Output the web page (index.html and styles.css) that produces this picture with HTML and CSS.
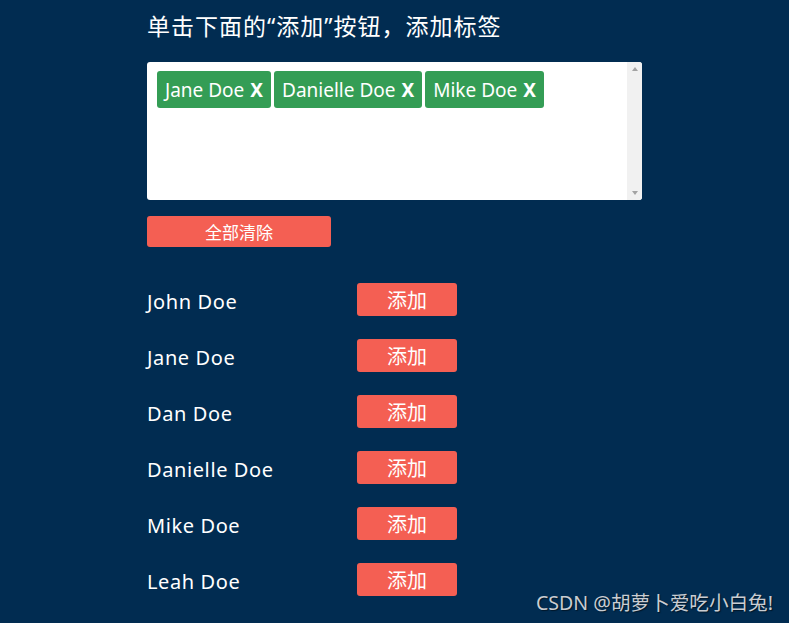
FILE: index.html
```html
<!DOCTYPE html>
<html lang="zh-CN">
<head>
<meta charset="utf-8">
<title>添加标签</title>
<link rel="stylesheet" href="styles.css">
</head>
<body>
<main class="page">
  <h1 class="title">单击下面的“添加”按钮，添加标签</h1>
  <div class="tagbox">
    <div class="tags">
      <span class="tag">Jane Doe <b class="tag-x">X</b></span>
      <span class="tag">Danielle Doe <b class="tag-x">X</b></span>
      <span class="tag">Mike Doe <b class="tag-x">X</b></span>
    </div>
    <div class="scrollbar" aria-hidden="true">
      <span class="arrow up"></span>
      <span class="arrow down"></span>
    </div>
  </div>
  <button class="btn clear">全部清除</button>
  <ul class="people">
    <li class="person"><span class="name">John Doe</span><button class="btn add">添加</button></li>
    <li class="person"><span class="name">Jane Doe</span><button class="btn add">添加</button></li>
    <li class="person"><span class="name">Dan Doe</span><button class="btn add">添加</button></li>
    <li class="person"><span class="name">Danielle Doe</span><button class="btn add">添加</button></li>
    <li class="person"><span class="name">Mike Doe</span><button class="btn add">添加</button></li>
    <li class="person"><span class="name">Leah Doe</span><button class="btn add">添加</button></li>
  </ul>
</main>
<div class="watermark">CSDN @胡萝卜爱吃小白兔!</div>
</body>
</html>
```

FILE: styles.css
```css
html, body {
  margin: 0;
  height: 100%;
}

body {
  background: #012c51;
  color: #fff;
  font-family: "Noto Sans", "Noto Sans CJK SC", sans-serif;
  overflow: hidden;
  position: relative;
}

.page {
  padding: 10px 0 0 147px;
}

.title {
  margin: 0;
  font-size: 23px;
  line-height: 32px;
  font-weight: 400;
  letter-spacing: 1px;
}

/* tag area: tag list plus a classic vertical scrollbar strip */
.tagbox {
  margin-top: 20px;
  width: 495px;
  height: 138px;
  display: flex;
  background: #fff;
  border-radius: 3px;
  overflow: hidden;
}

.tags {
  flex: 1;
  display: flex;
  flex-wrap: wrap;
  align-content: flex-start;
  gap: 3px;
  padding: 9px 10px;
}

.scrollbar {
  width: 15px;
  background: #f1f1f1;
  display: flex;
  flex-direction: column;
  justify-content: space-between;
  align-items: center;
  padding: 5px 0;
}

.arrow {
  width: 0;
  height: 0;
  border-left: 3.5px solid transparent;
  border-right: 3.5px solid transparent;
}

.arrow.up {
  border-bottom: 4px solid #a3a3a3;
}

.arrow.down {
  border-top: 4px solid #a3a3a3;
}

.tag {
  display: inline-flex;
  align-items: center;
  gap: 6px;
  height: 37px;
  padding: 0 8px;
  background: #349d55;
  color: #fff;
  border-radius: 3px;
  font-size: 19px;
}

.tag-x {
  font-weight: 700;
}

.btn {
  display: flex;
  align-items: center;
  justify-content: center;
  border: 0;
  border-radius: 3px;
  background: #f45f53;
  color: #fff;
  font-family: "Noto Sans CJK SC", sans-serif;
  padding: 0;
}

.clear {
  margin-top: 16px;
  width: 184px;
  height: 31px;
  font-size: 17px;
}

.people {
  list-style: none;
  margin: 36px 0 0;
  padding: 0;
  display: flex;
  flex-direction: column;
  gap: 23px;
}

.person {
  display: flex;
  align-items: center;
  height: 33px;
}

.name {
  width: 210px;
  font-size: 20px;
  letter-spacing: 0.6px;
  padding-top: 3px;
}

.add {
  width: 100px;
  height: 33px;
  font-size: 20px;
}

.watermark {
  position: absolute;
  right: 16px;
  bottom: 7px;
  font-family: "Noto Sans", "Noto Sans CJK SC", sans-serif;
  font-size: 19.6px;
  color: #c9cdd2;
  text-shadow: 1px 1px 1px rgba(0, 0, 0, 0.5);
}
```
